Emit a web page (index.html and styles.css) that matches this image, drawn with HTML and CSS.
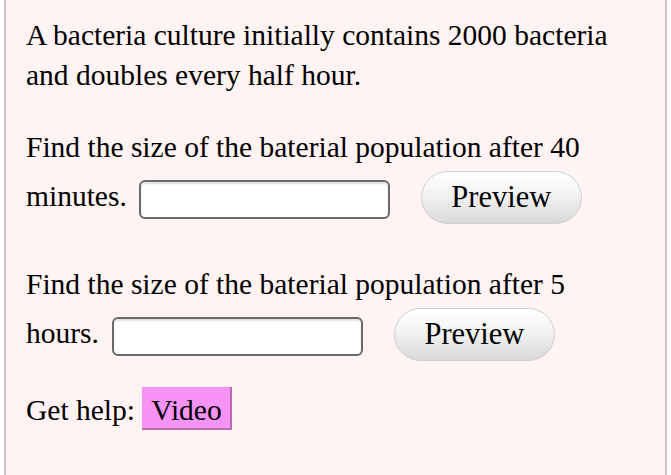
FILE: index.html
```html
<!DOCTYPE html>
<html>
<head>
<meta charset="utf-8">
<link rel="stylesheet" href="styles.css">
</head>
<body>
<div class="problem">
  <p class="para intro">A bacteria culture initially contains 2000 bacteria and doubles every half hour.</p>
  <p class="para">Find the size of the baterial population after 40 minutes.<input class="answer answer-first" type="text"><button class="preview preview-first" type="button">Preview</button></p>
  <p class="para last">Find the size of the baterial population after 5 hours.<input class="answer answer-second" type="text"><button class="preview preview-second" type="button">Preview</button></p>
  <p class="help">Get help: <span class="video">Video</span></p>
</div>
</body>
</html>
```
FILE: styles.css
```css
html, body {
  margin: 0;
  padding: 0;
  background: #ffffff;
}
body {
  height: 475px;
  overflow: hidden;
}
.problem {
  margin: 0 4px;
  height: 475px;
  box-sizing: border-box;
  border-left: 2px solid #d6c2ca;
  border-right: 2px solid #d6c2ca;
  background: #fff3f3;
  padding: 15px 20px 0 20px;
  font-family: "Liberation Serif", "Times New Roman", serif;
  font-size: 29.5px;
  line-height: 40px;
  color: #000;
}
.para {
  margin: 0 0 32px 0;
}
.para.last {
  margin-bottom: 18px;
}
.answer {
  box-sizing: border-box;
  width: 251px;
  height: 39px;
  margin: 0 0 0 12px;
  border: 2px solid #6a6a6a;
  border-radius: 6px;
  background: #fff;
  box-shadow: inset 0 2px 2px rgba(0,0,0,0.12);
  vertical-align: middle;
  padding: 0;
}
.answer-second {
  margin-left: 13px;
}
.preview {
  box-sizing: border-box;
  width: 161px;
  height: 53px;
  margin: 6px 0 6px 31px;
  border: 1px solid #cfcfcf;
  border-radius: 27px;
  background: linear-gradient(#ffffff 0%, #f4f4f4 40%, #d9d9d9 100%);
  font-family: "Liberation Serif", "Times New Roman", serif;
  font-size: 30.5px;
  color: #000;
  vertical-align: middle;
  padding: 0;
  transform: translateY(-2px);
}
.help {
  margin: 0;
}
.video {
  display: inline-block;
  background: #f693f5;
  padding: 5px 8px 0 9px;
  line-height: 36px;
  border-right: 2px solid #b56fae;
  border-bottom: 2px solid #b56fae;
}
```
